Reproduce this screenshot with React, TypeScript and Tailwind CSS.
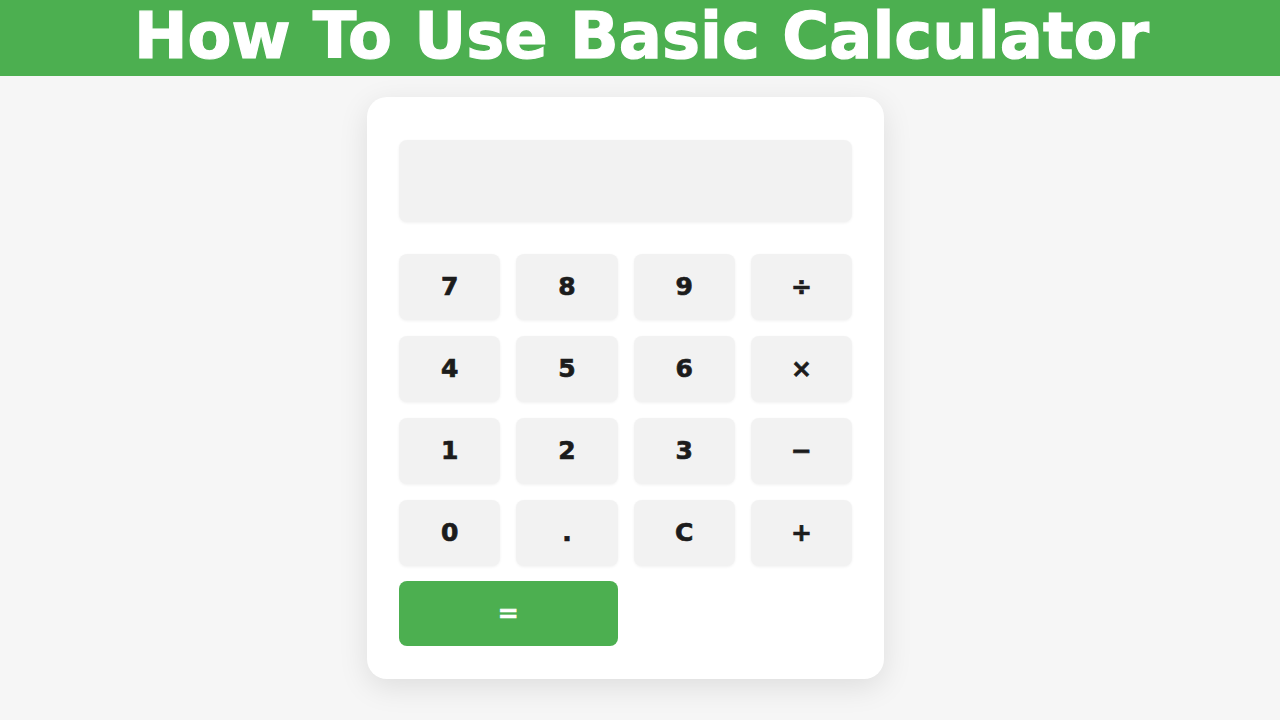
import { useState } from "react";

const keys = ["7", "8", "9", "÷", "4", "5", "6", "×", "1", "2", "3", "−", "0", ".", "C", "+"];

export default function App() {
  const [display, setDisplay] = useState("");

  function press(k: string) {
    if (k === "C") {
      setDisplay("");
      return;
    }
    setDisplay((d) => d + k);
  }

  function evaluate() {
    try {
      const expr = display.replace(/÷/g, "/").replace(/×/g, "*").replace(/−/g, "-");
      // eslint-disable-next-line no-new-func
      const result = Function(`"use strict"; return (${expr})`)();
      setDisplay(String(result));
    } catch {
      setDisplay("Error");
    }
  }

  return (
    <main className="min-h-screen bg-[#f6f6f6] font-['DejaVu_Sans',Arial,sans-serif]">
      {/* HEADER */}
      <header className="h-[76px] bg-[#4caf50] flex items-center justify-center">
        <h1 className="text-[64px] leading-none font-bold text-white [-webkit-text-stroke:1.2px_white] pb-[4px] pl-[3px]">
          How To Use Basic Calculator
        </h1>
      </header>

      {/* CALCULATOR */}
      <div className="flex justify-center pt-[21px]">
        <div className="mr-[29px] w-[517px] bg-white rounded-[20px] shadow-[0_8px_30px_rgba(0,0,0,0.1)] px-[32px] pt-[43px] pb-[33px]">
          <div className="h-[82px] rounded-[8px] bg-[#f2f2f2] shadow-[0_1px_3px_rgba(0,0,0,0.06)] flex items-center justify-end px-5 text-[30px] font-bold text-[#222]">
            {display}
          </div>

          <div className="mt-[32px] grid grid-cols-4 gap-x-[16px] gap-y-[16px]">
            {keys.map((k) => (
              <button
                key={k}
                onClick={() => press(k)}
                className="h-[66px] rounded-[8px] bg-[#f2f2f2] shadow-[0_1px_3px_rgba(0,0,0,0.06)] text-[25px] font-bold text-[#1c1c1c] [-webkit-text-stroke:0.7px_#1c1c1c] flex items-center justify-center"
              >
                {k}
              </button>
            ))}
            <button
              onClick={evaluate}
              className="col-span-2 -mt-[1px] h-[65px] rounded-[8px] bg-[#4caf50] text-[25px] font-bold text-white [-webkit-text-stroke:0.7px_white] flex items-center justify-center"
            >
              =
            </button>
          </div>
        </div>
      </div>
    </main>
  );
}
